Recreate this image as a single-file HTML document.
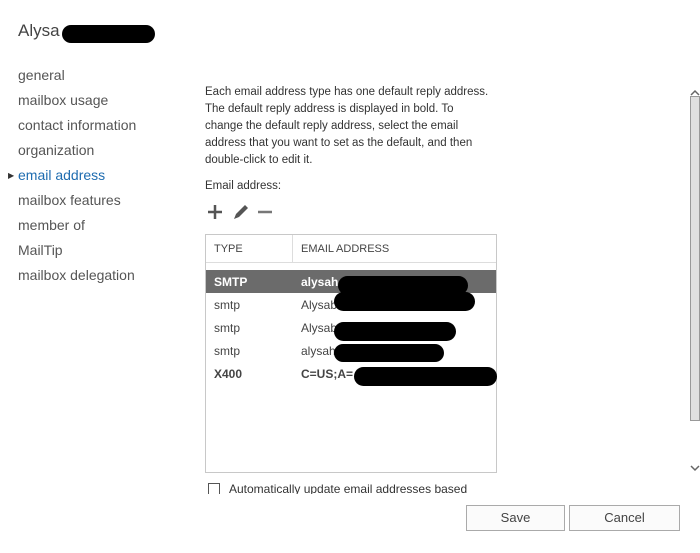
<html><head><style>
body{margin:0;width:700px;height:553px;background:#fff;font-family:"Segoe UI","Liberation Sans",sans-serif;color:#333;position:relative;overflow:hidden}
.a{position:absolute;white-space:nowrap}
.nav{font-size:14px;color:#555}
.blk{position:absolute;background:#000;border-radius:10px}
.r{position:absolute;left:214px;font-size:12px;color:#444}
.e{position:absolute;left:301px;font-size:12px;color:#444}
.btn{position:absolute;border:1px solid #aaa;background:#fbfbfb;font-size:13px;color:#444;text-align:center;line-height:24px;height:24px}
</style></head><body>
<div class="a" style="left:18px;top:21px;font-size:17px;color:#444">Alysa</div>
<div class="blk" style="left:62px;top:25px;width:93px;height:18px"></div>
<div class="a nav" style="left:18px;top:67px">general</div>
<div class="a nav" style="left:18px;top:92px">mailbox usage</div>
<div class="a nav" style="left:18px;top:117px">contact information</div>
<div class="a nav" style="left:18px;top:142px">organization</div>
<div class="a" style="left:8px;top:171px;font-size:8px;color:#333">&#9654;</div>
<div class="a nav" style="left:18px;top:167px;color:#1e6cb0">email address</div>
<div class="a nav" style="left:18px;top:192px">mailbox features</div>
<div class="a nav" style="left:18px;top:217px">member of</div>
<div class="a nav" style="left:18px;top:242px">MailTip</div>
<div class="a nav" style="left:18px;top:267px">mailbox delegation</div>
<div class="a" style="left:205px;top:84px;font-size:11.5px;line-height:17px;color:#333">Each email address type has one default reply address.<br>The default reply address is displayed in bold. To<br>change the default reply address, select the email<br>address that you want to set as the default, and then<br>double-click to edit it.</div>
<div class="a" style="left:205px;top:180px;font-size:11.5px;color:#333">Email address:</div>
<svg class="a" style="left:206px;top:204px" width="70" height="18"><path d="M2 8h14M9 1v14" stroke="#555" stroke-width="2.5"/><path d="M28 15l2-5 9-9 3 3-9 9z" fill="#555"/><path d="M52 8h14" stroke="#777" stroke-width="2.5"/></svg>
<div class="a" style="left:205px;top:234px;width:290px;height:237px;border:1px solid #c8c8c8"></div>
<div class="a" style="left:292px;top:235px;width:1px;height:28px;background:#ddd"></div>
<div class="a" style="left:206px;top:262px;width:290px;height:1px;background:#ddd"></div>
<div class="a" style="left:214px;top:243px;font-size:11px;color:#444">TYPE</div>
<div class="a" style="left:301px;top:243px;font-size:11px;color:#444">EMAIL ADDRESS</div>
<div class="a" style="left:206px;top:270px;width:290px;height:23px;background:#6b6b6b"></div>
<div class="r" style="top:275px;color:#fff;font-weight:bold">SMTP</div>
<div class="e" style="top:275px;color:#fff;font-weight:bold">alysah</div>
<div class="r" style="top:298px">smtp</div><div class="e" style="top:298px">Alysab</div>
<div class="r" style="top:321px">smtp</div><div class="e" style="top:321px">Alysab</div>
<div class="r" style="top:344px">smtp</div><div class="e" style="top:344px">alysah</div>
<div class="r" style="top:367px;font-weight:bold">X400</div><div class="e" style="top:367px;font-weight:bold">C=US;A=</div>
<div class="blk" style="left:338px;top:276px;width:130px;height:19px"></div>
<div class="blk" style="left:334px;top:292px;width:141px;height:19px"></div>
<div class="blk" style="left:334px;top:322px;width:122px;height:19px"></div>
<div class="blk" style="left:334px;top:344px;width:110px;height:18px"></div>
<div class="blk" style="left:354px;top:367px;width:143px;height:19px"></div>
<div class="a" style="left:690px;top:96px;width:10px;height:325px;background:#e0e0e0;border:1px solid #999;box-sizing:border-box"></div>
<svg class="a" style="left:690px;top:89px" width="10" height="8"><path d="M1 6l4-4 4 4" stroke="#666" stroke-width="1.5" fill="none"/></svg>
<svg class="a" style="left:690px;top:464px" width="10" height="8"><path d="M1 2l4 4 4-4" stroke="#666" stroke-width="1.5" fill="none"/></svg>
<div class="a" style="left:200px;top:478px;width:300px;height:16px;overflow:hidden">
<div class="a" style="left:8px;top:5px;width:10px;height:10px;border:1px solid #555"></div>
<div class="a" style="left:29px;top:4px;font-size:12px;color:#333">Automatically update email addresses based</div></div>
<div class="btn" style="left:466px;top:505px;width:97px">Save</div>
<div class="btn" style="left:569px;top:505px;width:109px">Cancel</div>
</body></html>
